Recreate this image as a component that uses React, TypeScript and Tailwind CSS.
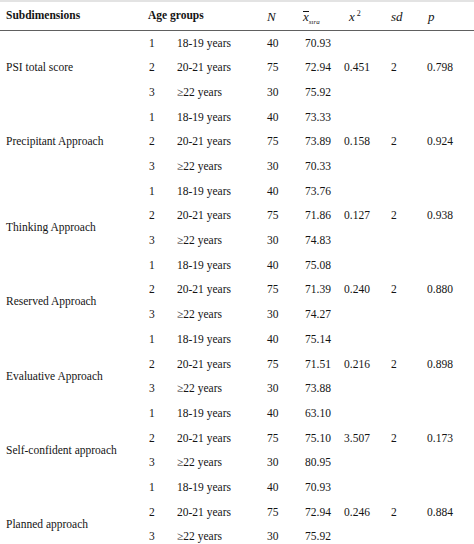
const groups = [
  {
    name: "PSI total score",
    means: ["70.93", "72.94", "75.92"],
    chi: "0.451",
    p: "0.798",
    shift: false,
  },
  {
    name: "Precipitant Approach",
    means: ["73.33", "73.89", "70.33"],
    chi: "0.158",
    p: "0.924",
    shift: false,
  },
  {
    name: "Thinking Approach",
    means: ["73.76", "71.86", "74.83"],
    chi: "0.127",
    p: "0.938",
    shift: true,
  },
  {
    name: "Reserved Approach",
    means: ["75.08", "71.39", "74.27"],
    chi: "0.240",
    p: "0.880",
    shift: true,
  },
  {
    name: "Evaluative Approach",
    means: ["75.14", "71.51", "73.88"],
    chi: "0.216",
    p: "0.898",
    shift: true,
  },
  {
    name: "Self-confident approach",
    means: ["63.10", "75.10", "80.95"],
    chi: "3.507",
    p: "0.173",
    shift: true,
  },
  {
    name: "Planned approach",
    means: ["70.93", "72.94", "75.92"],
    chi: "0.246",
    p: "0.884",
    shift: true,
  },
];

const ages = [
  { n: "1", label: "18-19 years", count: "40" },
  { n: "2", label: "20-21 years", count: "75" },
  { n: "3", label: "≥22 years", count: "30" },
];

export default function App() {
  return (
    <div
      className="w-[474px] h-[544px] overflow-hidden bg-white text-[#141414] border-t-2 border-[#e3e3e3]"
      style={{ fontFamily: '"Liberation Serif", "Times New Roman", serif' }}
    >
      <div className="grid grid-cols-[149px_28px_90px_38px_39px_47px_36px_1fr] grid-rows-[29px] auto-rows-[24.7px] text-[11.5px] leading-none">
        {/* header */}
        <div className="col-span-8 grid grid-cols-subgrid items-center border-b-[1.5px] border-[#606060]">
          <div className="pl-[6px] font-bold text-[11.5px]">Subdimensions</div>
          <div className="col-span-2 -ml-px font-bold text-[11.5px]">Age groups</div>
          <div className="italic text-[13px]">N</div>
          <div className="-ml-[2px] italic text-[13px]">
            <span className="relative inline-block">
              <span className="absolute left-0 right-0 top-[1px] h-px bg-[#141414]" />
              x
            </span>
            <span className="relative top-[3px] text-[7px]">sıra</span>
          </div>
          <div className="pl-[5px] italic text-[13px]">
            x
            <span className="relative -top-[5px] ml-[2px] text-[8px] not-italic">
              2
            </span>
          </div>
          <div className="italic text-[13px]">sd</div>
          <div className="pl-px italic text-[13px]">p</div>
        </div>

        {groups.map((g) =>
          ages.map((a, i) => (
            <Row key={g.name + a.n} group={g} age={a} index={i} />
          ))
        )}
      </div>
    </div>
  );
}

function Row({
  group,
  age,
  index,
}: {
  group: (typeof groups)[number];
  age: (typeof ages)[number];
  index: number;
}) {
  const mid = index === 1;
  return (
    <>
      {index === 0 && (
        <div
          className={`row-span-3 pl-[6px] flex items-center ${
            group.shift ? "pt-[24px]" : ""
          }`}
        >
          {group.name}
        </div>
      )}
      <div className="flex items-center">{age.n}</div>
      <div className="flex items-center">{age.label}</div>
      <div className="flex items-center">{age.count}</div>
      <div className="flex items-center">{group.means[index]}</div>
      <div className="flex items-center">{mid ? group.chi : ""}</div>
      <div className="flex items-center">{mid ? "2" : ""}</div>
      <div className="flex items-center">{mid ? group.p : ""}</div>
    </>
  );
}
